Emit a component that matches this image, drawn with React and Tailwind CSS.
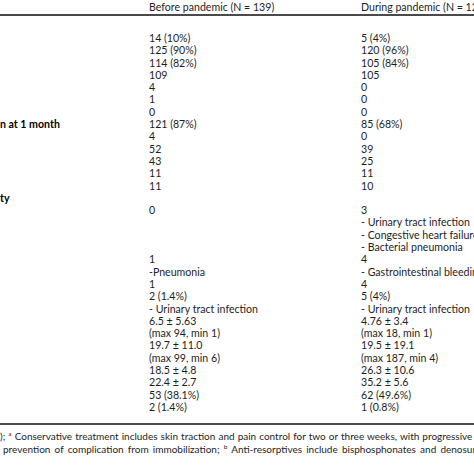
const ROWS = [
  ["", "14 (10%)", "5 (4%)"],
  ["", "125 (90%)", "120 (96%)"],
  ["", "114 (82%)", "105 (84%)"],
  ["", "109", "105"],
  ["", "4", "0"],
  ["", "1", "0"],
  ["", "0", "0"],
  ["n at 1 month", "121 (87%)", "85 (68%)"],
  ["", "4", "0"],
  ["", "52", "39"],
  ["", "43", "25"],
  ["", "11", "11"],
  ["", "11", "10"],
  ["ty", "", ""],
  ["", "0", "3"],
  ["", "", "- Urinary tract infection"],
  ["", "", "- Congestive heart failure"],
  ["", "", "- Bacterial pneumonia"],
  ["", "1", "4"],
  ["", "-Pneumonia", "- Gastrointestinal bleeding"],
  ["", "1", "4"],
  ["", "2 (1.4%)", "5 (4%)"],
  ["", "- Urinary tract infection", "- Urinary tract infection"],
  ["", "6.5 ± 5.63", "4.76 ± 3.4"],
  ["", "(max 94, min 1)", "(max 18, min 1)"],
  ["", "19.7 ± 11.0", "19.5 ± 19.1"],
  ["", "(max 99, min 6)", "(max 187, min 4)"],
  ["", "18.5 ± 4.8", "26.3 ± 10.6"],
  ["", "22.4 ± 2.7", "35.2 ± 5.6"],
  ["", "53 (38.1%)", "62 (49.6%)"],
  ["", "2 (1.4%)", "1 (0.8%)"]
];

function Row({ label, before, during }) {
  return (
    <div className="grid grid-cols-[149px_212px_1fr] h-[12.3px] leading-[12.3px] whitespace-nowrap">
      <div className="font-bold text-black">{label}</div>
      <div>{before}</div>
      <div>{during}</div>
    </div>
  );
}

export default function App() {
  return (
    <div className="w-[474px] h-[474px] overflow-hidden bg-white text-[#1e1e1e] text-[10.6px] font-['Lato',sans-serif]">
      <div className="w-[600px]">
        <div className="grid grid-cols-[149px_212px_1fr] h-[14px] leading-[14px] whitespace-nowrap">
          <div />
          <div>Before pandemic (N = 139)</div>
          <div>During pandemic (N = 125)</div>
        </div>
        <div className="h-[2px] bg-[#4a4a4a]" />
        <div className="pt-[16px]">
          {ROWS.map((row, i) => (
            <Row key={i} label={row[0]} before={row[1]} during={row[2]} />
          ))}
        </div>
        <div className="mt-[10px] h-[1.5px] bg-[#4a4a4a]" />
        <div className="pt-[5px] text-[10px] leading-[13px] whitespace-nowrap">
          <div className="[word-spacing:0.5px]">
            ); <sup className="text-[6.5px]">a</sup> Conservative treatment includes skin traction and pain control for two or three weeks, with progressive
          </div>
          <div className="pl-[3px] [word-spacing:1.6px]">
            prevention of complication from immobilization; <sup className="text-[6.5px]">b</sup> Anti-resorptives include bisphosphonates and denosumab.
          </div>
        </div>
      </div>
    </div>
  );
}
